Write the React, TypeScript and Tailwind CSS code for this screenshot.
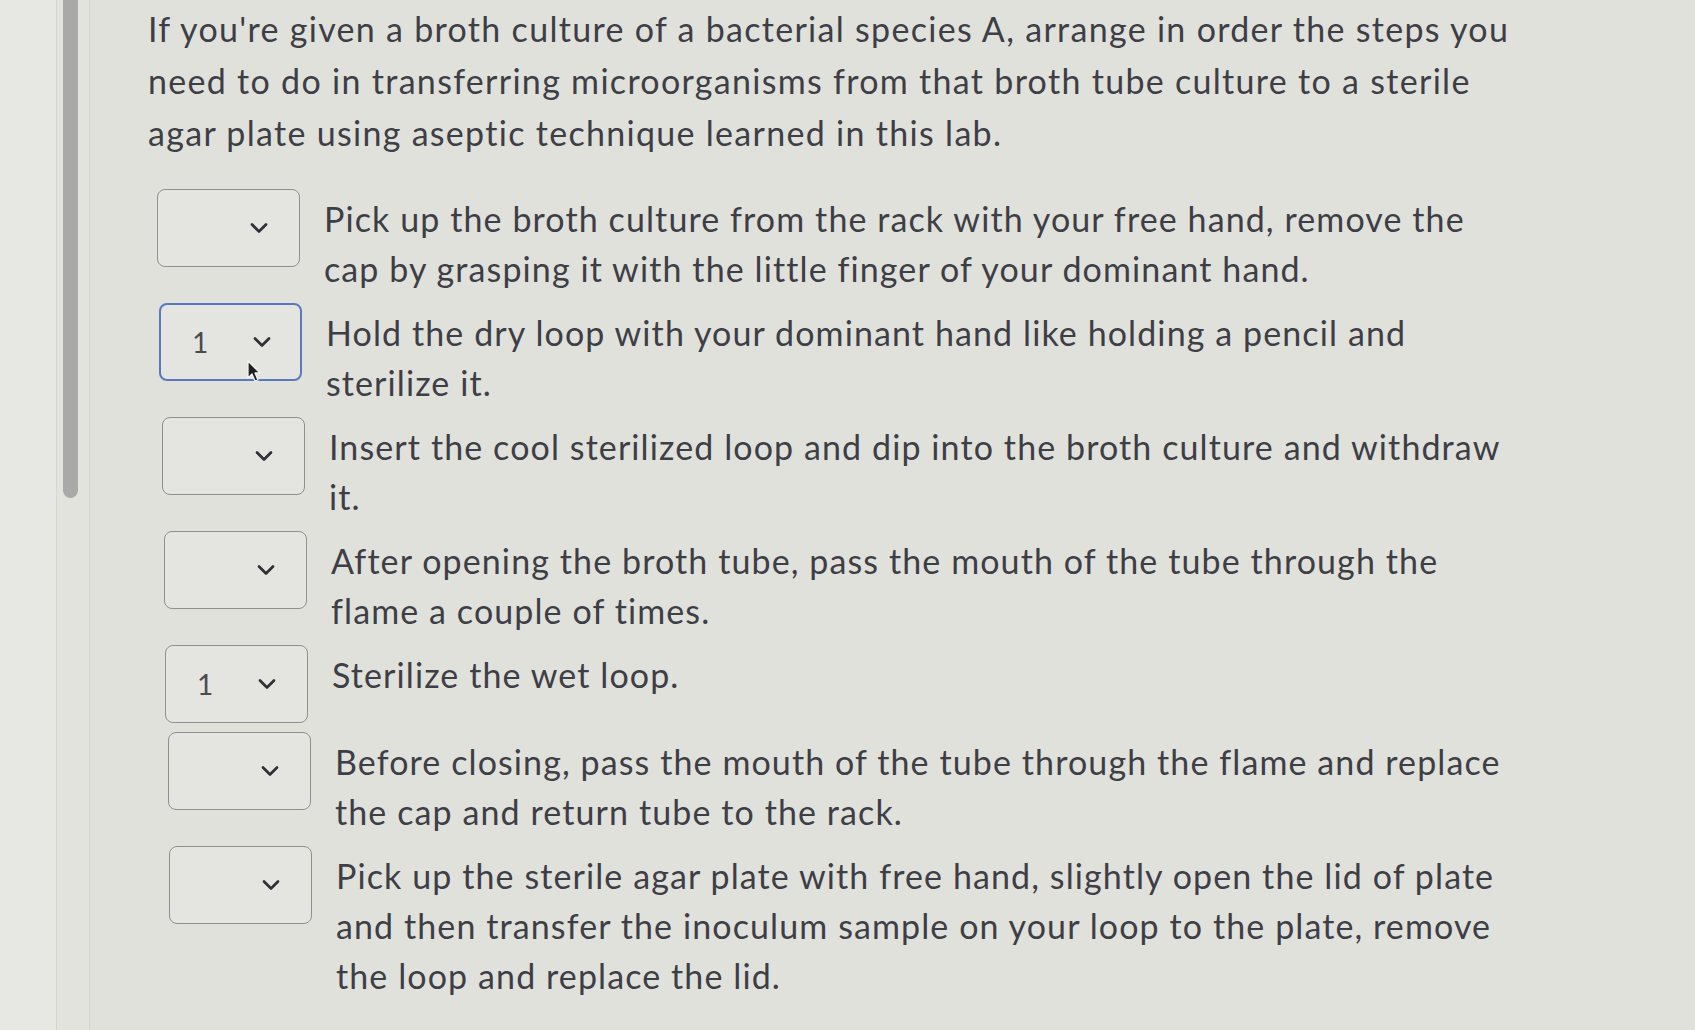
import { ChevronDown } from "lucide-react";

type Step = {
  value: string;
  text: string;
  focused?: boolean;
  shift: string;
};

const steps: Step[] = [
  {
    value: "",
    text: "Pick up the broth culture from the rack with your free hand, remove the cap by grasping it with the little finger of your dominant hand.",
    shift: "ml-[9px]",
  },
  {
    value: "1",
    text: "Hold the dry loop with your dominant hand like holding a pencil and sterilize it.",
    focused: true,
    shift: "ml-[11px]",
  },
  {
    value: "",
    text: "Insert the cool sterilized loop and dip into the broth culture and withdraw it.",
    shift: "ml-[14px]",
  },
  {
    value: "",
    text: "After opening the broth tube, pass the mouth of the tube through the flame a couple of times.",
    shift: "ml-[16px]",
  },
  {
    value: "1",
    text: "Sterilize the wet loop.",
    shift: "ml-[17px]",
  },
  {
    value: "",
    text: "Before closing, pass the mouth of the tube through the flame and replace the cap and return tube to the rack.",
    shift: "ml-[20px]",
  },
  {
    value: "",
    text: "Pick up the sterile agar plate with free hand, slightly open the lid of plate and then transfer the inoculum sample on your loop to the plate, remove the loop and replace the lid.",
    shift: "ml-[21px]",
  },
];

function Pointer() {
  return (
    <svg
      className="absolute left-[86px] top-[55px]"
      width="16"
      height="24"
      viewBox="0 0 16 24"
    >
      <path
        d="M1 1 L1 18 L5 14 L8 21 L11 20 L8 13 L13 13 Z"
        fill="#1f1f22"
        stroke="#f2f2f0"
        strokeWidth="1.3"
        strokeLinejoin="round"
      />
    </svg>
  );
}

function OrderSelect({ value, focused }: { value: string; focused?: boolean }) {
  return (
    <div
      className={
        focused
          ? "relative w-[143px] h-[78px] shrink-0 rounded-lg border-2 border-[#5a78bf] bg-[#e4e4e0] flex items-center"
          : "relative w-[143px] h-[78px] shrink-0 rounded-lg border-[1.5px] border-[#8f8f8e] bg-[#e4e4e0] flex items-center"
      }
    >
      <span className="absolute left-[31px] text-[28px] text-[#4a4b52]">{value}</span>
      <ChevronDown
        className="absolute left-[87px] text-[#2f3036]"
        size={28}
        strokeWidth={2.3}
      />
      {focused && <Pointer />}
    </div>
  );
}

export default function App() {
  return (
    <div className="w-[1695px] h-[1030px] overflow-hidden flex bg-[#e1e1dc] font-['Lato',sans-serif] text-[#3d3e46]">
      {/* left gutter with scroll track */}
      <div className="w-[56px] shrink-0 bg-[#e7e7e3]" />
      <div className="w-[34px] shrink-0 border-l border-r border-[#d6d6d1] bg-[#e3e3de] pl-[6px]">
        <div className="w-[15px] h-[498px] rounded-b-lg bg-[#a9aaa8]" />
      </div>

      <div className="flex-1 pl-[58px] pt-[3px]">
        <p className="w-[1380px] text-[34px] leading-[52px] tracking-[1.3px]">
          If you're given a broth culture of a bacterial species A, arrange in order the steps you need to do in
          transferring microorganisms from that broth tube culture to a sterile agar plate using aseptic technique
          learned in this lab.
        </p>

        <div className="mt-[30px] flex flex-col gap-[9px]">
          {steps.map((s, i) => (
            <div key={i} className={"flex items-start gap-[24px] " + s.shift}>
              <OrderSelect value={s.value} focused={s.focused} />
              <p className="w-[1190px] pt-[5px] text-[34px] leading-[50px] tracking-[1.1px]">{s.text}</p>
            </div>
          ))}
        </div>
      </div>
    </div>
  );
}
